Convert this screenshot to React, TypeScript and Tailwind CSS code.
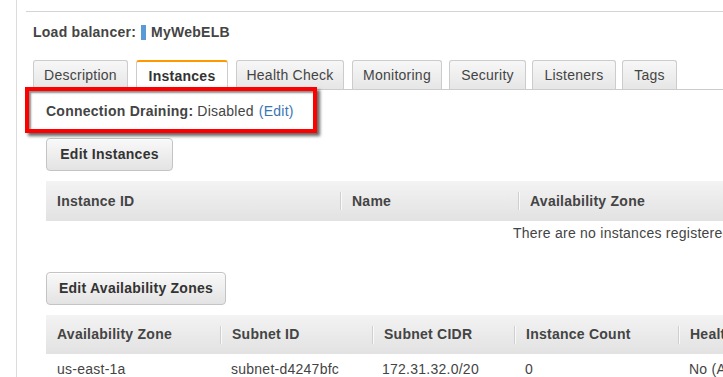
const font = { fontFamily: '"Liberation Sans", Arial, sans-serif', letterSpacing: "0.25px" };

const tabs = [
  { label: "Description", w: "w-[95px]", ml: "ml-0" },
  { label: "Instances", w: "w-[92px]", ml: "ml-[8px]" },
  { label: "Health Check", w: "w-[108px]", ml: "ml-[8px]" },
  { label: "Monitoring", w: "w-[90px]", ml: "ml-[8px]" },
  { label: "Security", w: "w-[77px]", ml: "ml-[7px]" },
  { label: "Listeners", w: "w-[84px]", ml: "ml-[6px]" },
  { label: "Tags", w: "w-[55px]", ml: "ml-[6px]" },
];

const zoneCols = [
  { label: "Availability Zone", w: "w-[174px]", value: "us-east-1a" },
  { label: "Subnet ID", w: "w-[152px]", value: "subnet-d4247bfc" },
  { label: "Subnet CIDR", w: "w-[142px]", value: "172.31.32.0/20" },
  { label: "Instance Count", w: "w-[164px]", value: "0" },
  { label: "Healthy?", w: "w-[200px]", value: "No (Availability Zone contains no healthy instances)" },
];

function Button({ children, w }: { children: string; w: string }) {
  return (
    <button className={`h-[33px] rounded-[4px] border border-[#c4c4c4] bg-gradient-to-b from-[#f9f9f9] to-[#e3e3e3] text-[14px] font-bold text-[#333] shadow-[inset_0_1px_0_#fff] ${w}`}>
      {children}
    </button>
  );
}

function HeaderCell({ label, w, first }: { label: string; w: string; first?: boolean }) {
  return (
    <div className={`flex h-full shrink-0 items-center ${w}`}>
      {!first && <div className="h-[18px] w-px bg-[#cfcfcf] shadow-[1px_0_0_#fafafa]" />}
      <span className="whitespace-nowrap pl-[11px]">{label}</span>
    </div>
  );
}

export default function App() {
  return (
    <div className="relative h-[377px] w-[723px] overflow-hidden bg-white text-[14px] text-[#444]" style={font}>
      <div className="ml-4 h-full border-l border-[#dcdcdc] pl-[9px] pt-[11px]">
        <div className="border-t border-[#d4d4d4] pl-[7px]">
          <div className="mt-[10px] flex h-5 items-center font-bold">
            <span>Load balancer:</span>
            <span className="ml-[5px] h-[15px] w-[5px] bg-[#5b9bd3]" />
            <span className="ml-[5px]">MyWebELB</span>
          </div>

          <div className="mt-[18px] flex border-b border-[#cccccc]">
            {tabs.map((t) =>
              t.label === "Instances" ? (
                <div
                  key={t.label}
                  className={`-mb-px flex h-[30px] items-center justify-center rounded-t-[3px] border border-b-0 border-[#cccccc] border-t-2 border-t-[#f90] bg-white font-bold text-[#333] ${t.w} ${t.ml}`}
                >
                  {t.label}
                </div>
              ) : (
                <div
                  key={t.label}
                  className={`flex h-[29px] items-center justify-center rounded-t-[3px] border border-b-0 border-[#cccccc] bg-gradient-to-b from-[#f7f7f7] to-[#e6e6e6] text-[#444] ${t.w} ${t.ml}`}
                >
                  {t.label}
                </div>
              )
            )}
          </div>

          <div className="pl-[13px]">
            <div className="mt-[11px] flex h-5 items-center">
              <span className="font-bold">Connection Draining:</span>
              <span className="ml-1">Disabled</span>
              <span className="ml-[5px] text-[#3a75b3]">(Edit)</span>
            </div>

            <div className="mt-[17px]">
              <Button w="w-[127px]">Edit Instances</Button>
            </div>

            <div className="mt-[10px] w-[900px]">
              <div className="flex h-10 items-center bg-gradient-to-b from-[#f3f3f3] to-[#e2e2e2] font-bold text-[#444]">
                <HeaderCell label="Instance ID" w="w-[294px]" first />
                <HeaderCell label="Name" w="w-[178px]" />
                <HeaderCell label="Availability Zone" w="w-[300px]" />
              </div>
              <div className="flex h-6 items-center pl-[467px] text-[#444]">
                <span className="whitespace-nowrap">There are no instances registered to this load balancer.</span>
              </div>
            </div>

            <div className="mt-[27px]">
              <Button w="w-[180px]">Edit Availability Zones</Button>
            </div>

            <div className="mt-[10px] w-[900px]">
              <div className="flex h-[39px] items-center bg-gradient-to-b from-[#f3f3f3] to-[#e2e2e2] font-bold text-[#444]">
                {zoneCols.map((c, i) => (
                  <HeaderCell key={c.label} label={c.label} w={c.w} first={i === 0} />
                ))}
              </div>
              <div className="flex pt-[5px]">
                {zoneCols.map((c, i) => (
                  <div key={c.label} className={`h-5 shrink-0 whitespace-nowrap ${c.w} ${i === 2 ? "pl-[10px]" : "pl-[11px]"}`}>
                    {c.value}
                  </div>
                ))}
              </div>
            </div>
          </div>
        </div>
      </div>

      <div className="pointer-events-none absolute left-[25px] top-[87px] h-[46px] w-[292px] border-4 border-[#ff0000] shadow-[3px_3px_3px_rgba(0,0,0,0.6),inset_2px_2px_2px_rgba(0,0,0,0.45)]" />
    </div>
  );
}
